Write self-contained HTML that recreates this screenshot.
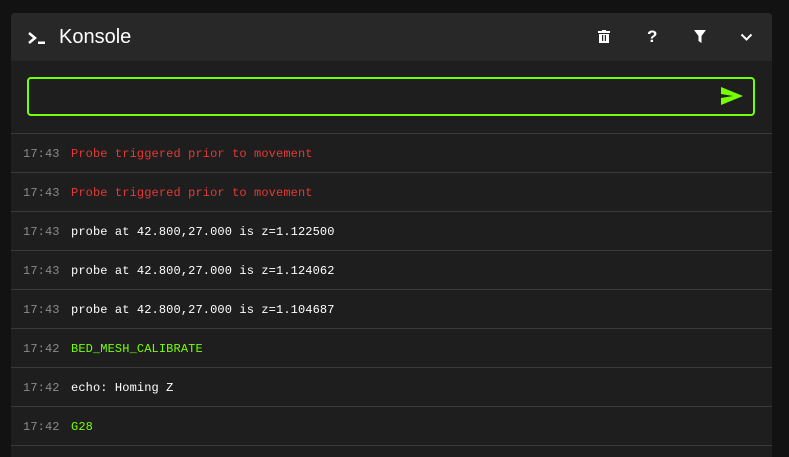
<!DOCTYPE html>
<html><head><style>
html,body{margin:0;width:789px;height:457px;background:#121212;overflow:hidden;font-family:"Liberation Sans",sans-serif}
.panel{position:absolute;left:11px;top:13px;width:761px;height:444px;background:#1e1e1e;border-radius:4px 4px 0 0;overflow:hidden}
.hdr{height:48px;background:#282828;position:relative}
.title{position:absolute;left:48px;top:13px;color:#fff;font-size:20px}
.ic{position:absolute;top:14px}
.inp{position:absolute;left:16px;top:64px;width:724px;height:35px;border:2px solid #76ff03;border-radius:4px}
.log{position:absolute;left:0;top:120px;width:100%;border-top:1px solid #3a3a3a}
.row{height:38px;border-bottom:1px solid #3a3a3a;font-family:"Liberation Mono",monospace;font-size:12px;letter-spacing:0.12px;line-height:41px;white-space:pre;position:relative}
.t{position:absolute;left:12px;color:#8a8a8a}
.m{position:absolute;left:60px;color:#fff}
.r{color:#e53935}.g{color:#76ff03}
</style></head><body>
<div class="panel">
<div class="hdr">
<svg class="ic" style="left:17px;top:18px" width="20" height="14" viewBox="0 0 20 14"><path d="M1 2l6 5-6 5" stroke="#fff" stroke-width="2.5" fill="none"/><rect x="10" y="10.5" width="7" height="2.5" fill="#fff"/></svg>
<div class="title">Konsole</div>
<svg class="ic" style="left:587px;top:17px" width="12" height="14" viewBox="0 0 12 14"><rect x="0" y="1" width="12" height="2" fill="#fff"/><rect x="4" y="0" width="4" height="2" fill="#fff"/><path d="M1 4h10v9H1z" fill="#fff"/><rect x="4" y="5" width="1.2" height="6" fill="#282828"/><rect x="6.8" y="5" width="1.2" height="6" fill="#282828"/></svg>
<div class="ic" style="left:636px;top:14px;color:#fff;font-size:17px;font-weight:bold">?</div>
<svg class="ic" style="left:683px;top:17px" width="12" height="13" viewBox="0 0 12 13"><path d="M0 0h12L7.5 6v7l-3-2V6z" fill="#fff"/></svg>
<svg class="ic" style="left:729px;top:20px" width="13" height="9" viewBox="0 0 13 9"><path d="M1.5 1.5l5 5 5-5" stroke="#fff" stroke-width="2" fill="none"/></svg>
</div>
<div class="inp"><svg style="position:absolute;right:10px;top:8px" width="22" height="18" viewBox="0 0 22 18"><path d="M0 0L22 9 0 18 0 11 12 9 0 7z" fill="#76ff03"/></svg></div>
<div class="log">
<div class="row"><span class="t">17:43</span><span class="m r">Probe triggered prior to movement</span></div>
<div class="row"><span class="t">17:43</span><span class="m r">Probe triggered prior to movement</span></div>
<div class="row"><span class="t">17:43</span><span class="m">probe at 42.800,27.000 is z=1.122500</span></div>
<div class="row"><span class="t">17:43</span><span class="m">probe at 42.800,27.000 is z=1.124062</span></div>
<div class="row"><span class="t">17:43</span><span class="m">probe at 42.800,27.000 is z=1.104687</span></div>
<div class="row"><span class="t">17:42</span><span class="m g">BED_MESH_CALIBRATE</span></div>
<div class="row"><span class="t">17:42</span><span class="m">echo: Homing Z</span></div>
<div class="row"><span class="t">17:42</span><span class="m g">G28</span></div>
</div>
</div>
</body></html>
